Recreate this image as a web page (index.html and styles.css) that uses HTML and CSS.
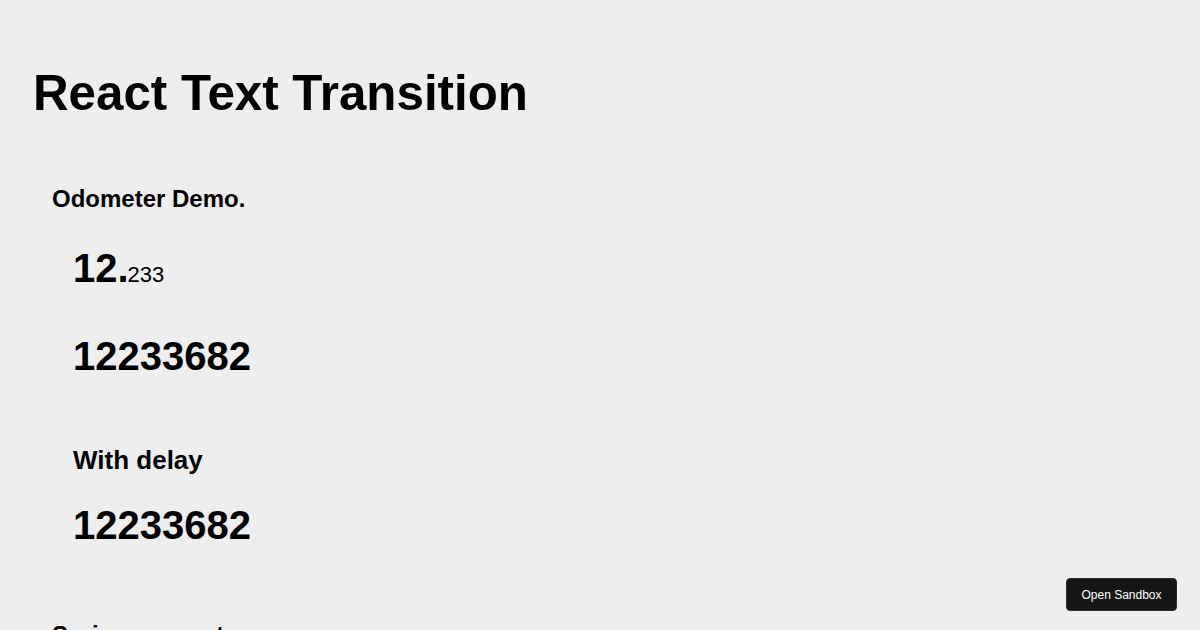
FILE: index.html
```html
<!DOCTYPE html>
<html lang="en">
<head>
    <meta charset="UTF-8">
    <meta name="viewport" content="width=device-width, initial-scale=1.0">
    <title>React Text Transition</title>
    <link rel="stylesheet" href="styles.css">
</head>
<body>
    <div class="page">
        <h1 class="page-title">React Text Transition</h1>

        <section class="demo">
            <h2 class="demo-title">Odometer Demo.</h2>
            <div class="demo-body">
                <div class="number">12.<span class="decimals">233</span></div>
                <div class="number number-second">12233682</div>

                <h3 class="sub-title">With delay</h3>
                <div class="number number-delay">12233682</div>
            </div>
        </section>

        <section class="demo demo-next">
            <h2 class="demo-title">Spring support</h2>
        </section>
    </div>

    <a class="sandbox-button" href="#">Open Sandbox</a>
</body>
</html>
```

FILE: styles.css
```css
body {
    margin: 0;
    background: #eeeeee;
    color: #000;
    font-family: "Liberation Sans", Arial, sans-serif;
    overflow: hidden;
}

.page {
    padding: 0 33px;
}

.page-title {
    margin: 63px 0 0;
    font-size: 49.3px;
    line-height: 1.2;
    font-weight: bold;
}

.demo {
    padding-left: 19px;
}

.demo-title {
    margin: 63px 0 0;
    font-size: 24px;
    line-height: 1.2;
    font-weight: bold;
}

.demo-body {
    padding-left: 21px;
}

.number {
    margin-top: 30px;
    font-size: 40px;
    line-height: 1.2;
    font-weight: bold;
}

.number .decimals {
    margin-left: -1px;
    font-size: 22px;
    font-weight: normal;
}

.number-second {
    margin-top: 40px;
}

.sub-title {
    margin: 65px 0 0;
    font-size: 26px;
    line-height: 1.2;
    font-weight: bold;
}

.number-delay {
    margin-top: 25px;
}

.demo-next .demo-title {
    margin-top: 72px;
}

.sandbox-button {
    position: fixed;
    right: 23px;
    bottom: 19px;
    display: block;
    width: 111px;
    height: 33px;
    line-height: 33px;
    text-align: center;
    background: #151515;
    color: #fff;
    font-size: 12px;
    text-decoration: none;
    border-radius: 4px;
    border: 1px solid #2a2a2a;
    box-sizing: border-box;
}
```
